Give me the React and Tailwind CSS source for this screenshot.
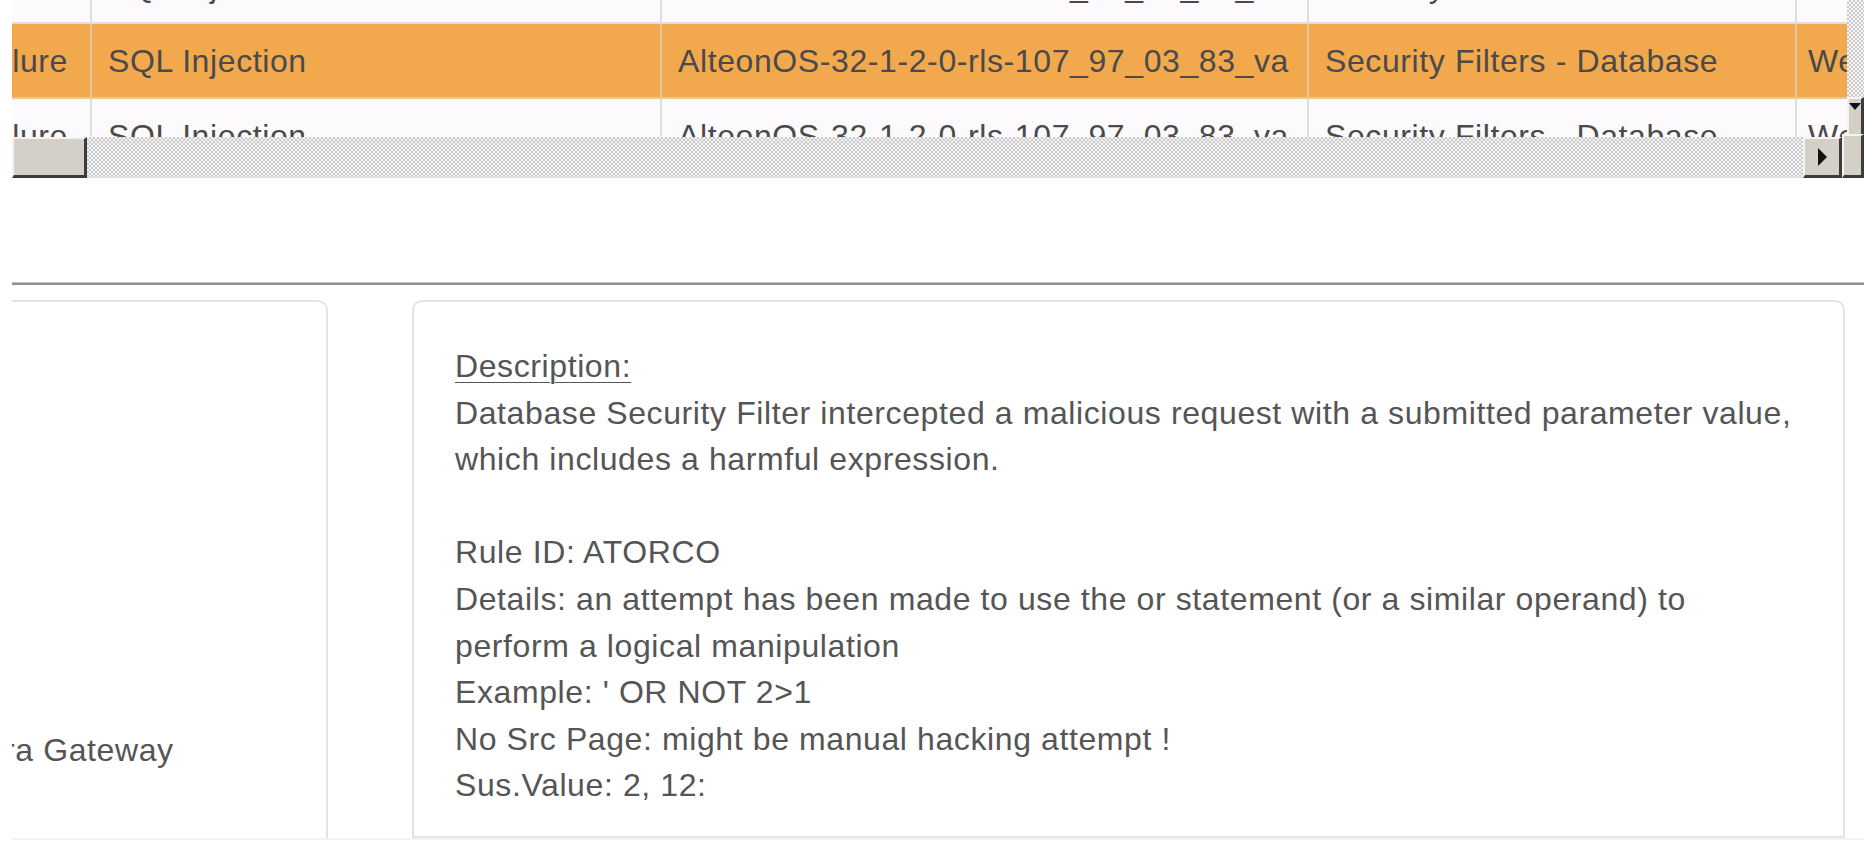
import React from "react";

const cells = [
  { text: "Failure", className: "w-[80px] justify-end pr-[22px]" },
  { text: "SQL Injection", className: "w-[570px] pl-4" },
  { text: "AlteonOS-32-1-2-0-rls-107_97_03_83_va", className: "w-[647px] pl-4" },
  { text: "Security Filters - Database", className: "w-[488px] pl-4" },
  { text: "Web Application", className: "w-[120px] pl-[11px]" },
];

const detailLines = [
  "Database Security Filter intercepted a malicious request with a submitted parameter value,",
  "which includes a harmful expression.",
  "\u00a0",
  "Rule ID: ATORCO",
  "Details: an attempt has been made to use the or statement (or a similar operand) to",
  "perform a logical manipulation",
  "Example: ' OR NOT 2>1",
  "No Src Page: might be manual hacking attempt !",
  "Sus.Value: 2, 12:",
];

const TableRow = ({ active }) => {
  const tone = active
    ? "bg-[#f2a94e] border-[#e9c79c]"
    : "bg-[#fcfafd] border-[#dedede]";
  return (
    <div className={`flex h-[75px] shrink-0 border-b-2 ${tone}`}>
      {cells.map((cell) => (
        <div
          key={cell.text}
          className={`flex shrink-0 items-center overflow-hidden whitespace-nowrap border-r-2 ${tone} ${cell.className}`}
        >
          {cell.text}
        </div>
      ))}
    </div>
  );
};

const RaisedBox = ({ className = "", children }) => (
  <div
    className={`flex items-center justify-center bg-[#d4d0c8] border-t-2 border-l-2 border-t-[#f4f3f0] border-l-[#f4f3f0] border-r-[3px] border-b-[3px] border-r-[#3c3c3c] border-b-[#3c3c3c] ${className}`}
  >
    {children}
  </div>
);

const checker =
  "bg-[repeating-conic-gradient(#cbcbcb_0%_25%,#f3f3f3_0%_50%)] bg-[length:4px_4px]";

const App = () => {
  return (
    <div className="w-[1864px] h-[848px] overflow-hidden bg-white pl-3 font-['Liberation_Sans',Arial,sans-serif] text-[32px] tracking-[0.6px]">
      {/* results grid, scrolled sideways */}
      <div className="flex h-[137px]">
        <div className="flex-1 min-w-0 overflow-hidden bg-[#fcfafd] text-[#4a4a4a]">
          <div className="-mt-[51px] flex flex-col">
            <TableRow />
            <TableRow active />
            <TableRow />
          </div>
        </div>
        <div className="w-[17px] shrink-0 flex flex-col">
          <div className={`h-[97px] ${checker}`}></div>
          <RaisedBox className="flex-1 items-start justify-end">
            <svg width="12" height="8" viewBox="0 0 12 8" className="mt-[4px]">
              <path d="M0 0h12L6 7z" fill="#111" />
            </svg>
          </RaisedBox>
        </div>
      </div>

      <div className="flex h-[41px]">
        <RaisedBox className="w-[75px] shrink-0" />
        <div className={`flex-1 ${checker}`}></div>
        <RaisedBox className="w-[39px] shrink-0">
          <svg width="10" height="18" viewBox="0 0 10 18">
            <path d="M1 0v18l9-9z" fill="#111" />
          </svg>
        </RaisedBox>
        <RaisedBox className="w-[22px] shrink-0 -mt-[3px]" />
      </div>

      <div className="mt-[104px] h-[3px] bg-[#8f8f8f] border-t border-[#c4c4c4]"></div>

      <div className="mt-[15px] flex h-[538px] overflow-hidden text-[#555555]">
        <div className="w-[316px] shrink-0 border-t-2 border-r-2 border-[#e3e3e3] rounded-tr-[10px] overflow-hidden">
          <div className="mt-[425px] -ml-[8px] leading-[46px] whitespace-nowrap">
            ra Gateway
          </div>
        </div>
        <div className="ml-[84px] w-[1433px] shrink-0 border-2 border-[#e3e3e3] rounded-t-[10px] pt-[41px] pl-[41px] leading-[46.6px]">
          <div className="underline underline-offset-[5px] decoration-1">Description:</div>
          {detailLines.map((line, i) => (
            <div key={i} className="whitespace-nowrap">
              {line}
            </div>
          ))}
        </div>
      </div>
      <div className="h-[2px] bg-[#f7f0f7]"></div>
    </div>
  );
};

export default App;
